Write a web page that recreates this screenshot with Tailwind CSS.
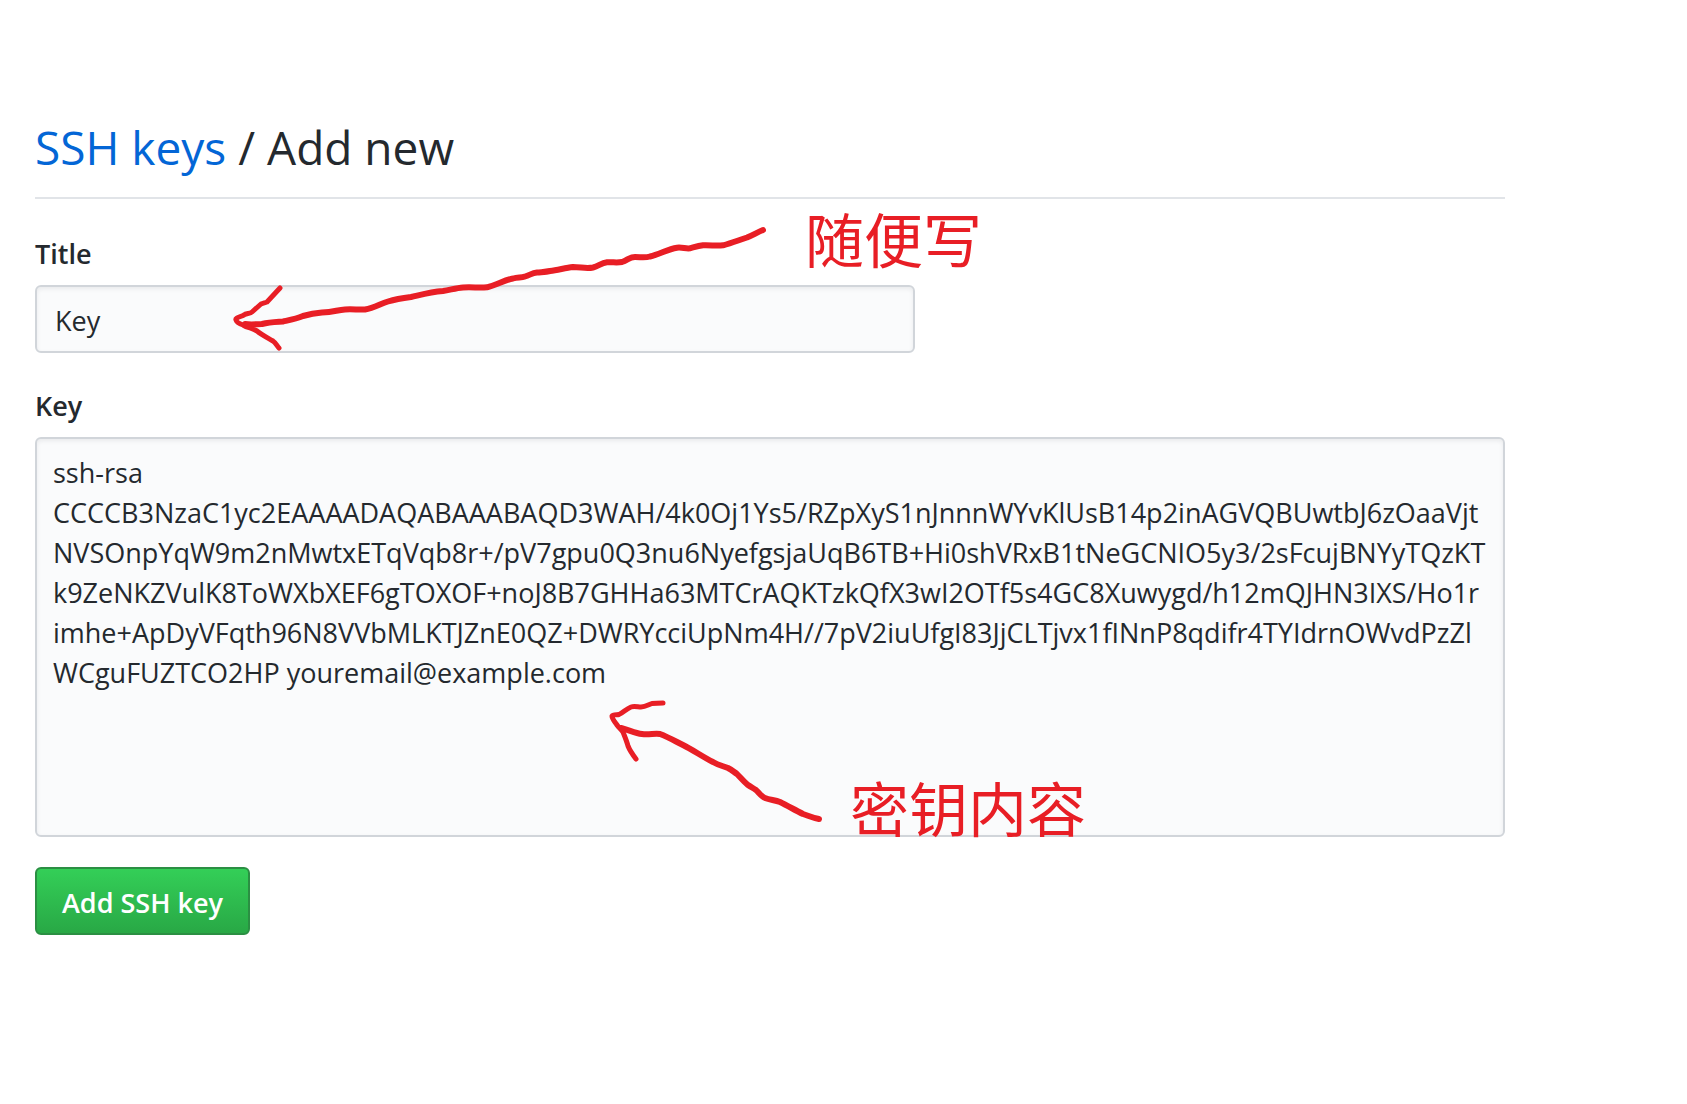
<!doctype html>
<html lang="en">
<head>
    <meta charset="UTF-8">
    <meta name="viewport" content="width=device-width, initial-scale=1.0">
    <title>Add new SSH key</title>
    <script src="https://cdn.jsdelivr.net/npm/@tailwindcss/browser@4"></script>
</head>
<body class="relative min-h-screen bg-white font-['Open_Sans','Noto_Sans_CJK_SC',sans-serif] text-[#24292e]">
    <main class="pt-[111px] pl-[35px] pr-[182px]">
        <h1 class="border-b-2 border-[#e1e4e8] pb-3.5 text-[46px] leading-[72px]">
            <a href="#" class="text-[#0366d6]">SSH keys</a> / Add new
        </h1>

        <form class="flex flex-col items-start pt-[34px]">
            <div class="mb-8 flex w-full flex-col gap-2.5">
                <label for="key-title" class="text-[27px] leading-[42px] font-semibold">Title</label>
                <input id="key-title" type="text" value="Key"
                       class="h-[68px] w-[880px] max-w-full rounded-md border-2 border-[#d1d5da] bg-[#fafbfc] px-[18px] pt-0.5 text-[27px] shadow-[inset_0_2px_4px_rgba(27,31,35,0.075)]">
            </div>

            <div class="mb-[30px] flex w-full flex-col gap-2.5">
                <label for="key-body" class="text-[27px] leading-[42px] font-semibold">Key</label>
                <textarea id="key-body" wrap="off" spellcheck="false"
                          class="h-[400px] w-full resize-none overflow-hidden rounded-md border-2 border-[#d1d5da] bg-[#fafbfc] px-4 py-3.5 text-[27px] leading-10 shadow-[inset_0_2px_4px_rgba(27,31,35,0.075)]">ssh-rsa
CCCCB3NzaC1yc2EAAAADAQABAAABAQD3WAH/4k0Oj1Ys5/RZpXyS1nJnnnWYvKlUsB14p2inAGVQBUwtbJ6zOaaVjt
NVSOnpYqW9m2nMwtxETqVqb8r+/pV7gpu0Q3nu6NyefgsjaUqB6TB+Hi0shVRxB1tNeGCNIO5y3/2sFcujBNYyTQzKT
k9ZeNKZVulK8ToWXbXEF6gTOXOF+noJ8B7GHHa63MTCrAQKTzkQfX3wI2OTf5s4GC8Xuwygd/h12mQJHN3IXS/Ho1r
imhe+ApDyVFqth96N8VVbMLKTJZnE0QZ+DWRYcciUpNm4H//7pV2iuUfgI83JjCLTjvx1fINnP8qdifr4TYIdrnOWvdPzZl
WCguFUZTCO2HP youremail@example.com</textarea>
            </div>

            <button type="button"
                    class="h-[68px] rounded-md border-2 border-[#2b8f43] bg-linear-to-b from-[#34d058] to-[#28a745] bg-origin-border px-[25px] pt-1 text-[27px] font-semibold text-white">Add SSH key</button>
        </form>
    </main>

    <!-- Hand-drawn notes on top of the form -->
    <svg class="pointer-events-none absolute top-0 left-0" width="1000" height="900" viewBox="0 0 1000 900" fill="none" stroke="#e81e25" stroke-linecap="round" stroke-linejoin="round" aria-hidden="true">
        <path stroke-width="6" d="M245 324C252 325 257 324 262 324C270 322 276 322 283 321.500C290 320 296 319 303 316C310 314 316 313 322 312.500C334 312 337 310 345 309.500C354 309 358 310 365 309.500C374 308 380 304 388 301.500C396 299 403 298 411 297C420 295 430 292 443 291C450 290 456 288 463 287.500C473 287 479 288 487 287.300C496 285 505 280 513 278.500C518 277 521 278 525 276.500C530 275 532 273 537 272.500C542 272 546 272 550 271C558 270 565 268 573 267C581 267 586 269 593 267.500C599 266 601 263 607 262.300C613 262 617 263 622 262C628 260 629 257 635 257C641 257 645 258 650 256.500C660 254 668 249 677 247.700C682 247 686 249 690 248.300C695 247 698 246 703 245.300C711 245 716 246 723 245.300C732 243 739 240 747 237.500C753 235 758 232 763 230"/>
        <path stroke-width="5" d="M280 288L267 302C264 303 263 303 261 304L252 312C250 314 246 313 244 315C240 317 235 318 236 320C237 323 240 324 243 325C248 328 252 328 257 331C262 335 268 338 273 341C276 343 277 346 279 348"/>
        <path stroke-width="6" d="M621 728C629 730 635 733 642 734C649 735 655 733 660 734C668 737 675 741 683 745C693 750 703 757 713 762C718 765 723 766 728 768C732 770 734 772 737 774C741 778 744 782 748 785C751 787 753 788 756 790C760 794 762 797 765 798C770 800 775 800 780 802C788 806 795 810 803 814C809 816 813 818 819 819"/>
        <path stroke-width="5" d="M663 703C659 703 656 703 652 703.500C648 705 645 707 641 707C638 707 634 706 631 707C626 709 623 713 619 714.500C617 715 613 714 612 716C612 719 615 722 617 725C619 728 621 729 623 732C625 737 627 742 628 746C630 751 633 755 636 759"/>
    </svg>
    <p class="absolute top-[200px] left-[805px] text-[59px] leading-[80px] text-[#e81e25]">随便写</p>
    <p class="absolute top-[769px] left-[850px] text-[59px] leading-[80px] text-[#e81e25]">密钥内容</p>
</body>
</html>
